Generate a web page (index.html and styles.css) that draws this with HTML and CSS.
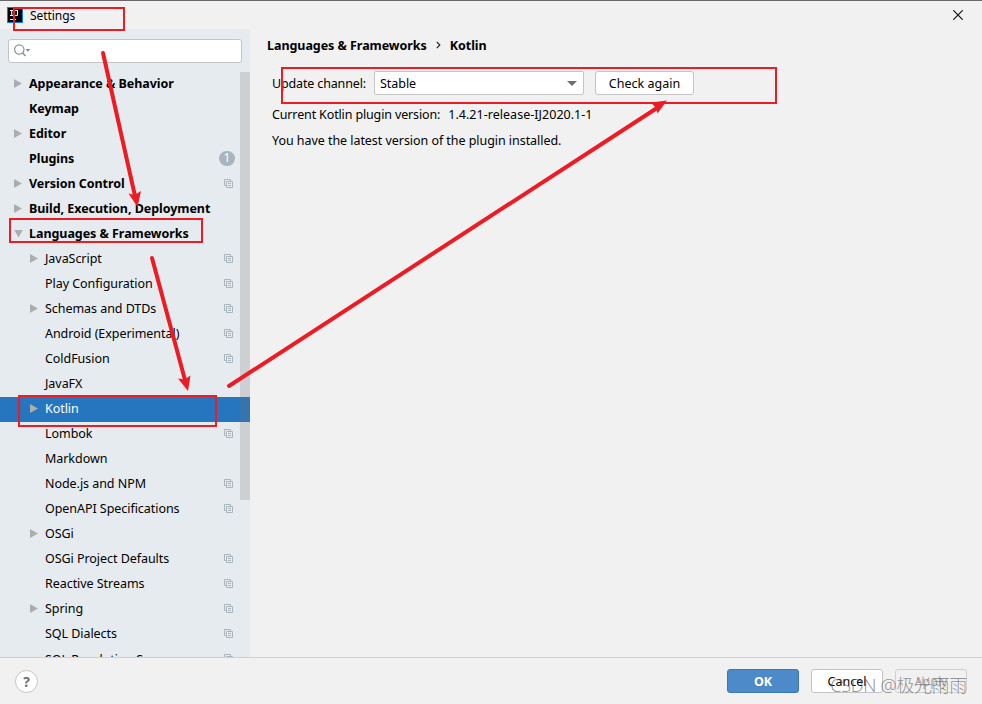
FILE: index.html
```html
<!DOCTYPE html>
<html lang="en">
<head>
  <meta charset="UTF-8" />
  <title>Settings</title>
  <link rel="stylesheet" href="styles.css">
</head>
<body>
  <svg class="defs" width="0" height="0">
    <symbol id="copy" viewBox="0 0 9 9">
      <path d="M2 6.5H.5V.5H6.5V2M2.5 2.5H8.5V8.5H2.5ZM4 4.5H7M4 6.5H7" fill="none" stroke="#a9b4bd" />
    </symbol>
  </svg>

  <div class="window">
    <header class="titlebar">
      <svg class="logo" width="16" height="16" viewBox="0 0 16 16">
        <rect width="16" height="16" fill="#087cfa" />
        <rect x="1" y="1" width="14" height="14" fill="#000" />
        <path d="M3 3.5H6.5M4.75 3.5V8.5M3 8.5H6.5M8 3.5H10.500V7.5Q10.500 8.5 9.5 8.5H8" fill="none" stroke="#fff" stroke-width="1.1" />
        <path d="M3 12.5H9" stroke="#fff" />
      </svg>
      <span class="title">Settings</span>
      <svg class="close" width="10" height="10" viewBox="0 0 10 10">
        <path d="M.3 .3L9.7 9.7M9.7 .3L.3 9.7" stroke="#111" stroke-width="1.2" />
      </svg>
    </header>

    <div class="main">
      <aside class="sidebar">
        <div class="search">
          <svg width="17" height="14" viewBox="0 0 17 14">
            <circle cx="5.3" cy="5.5" r="4.7" fill="none" stroke="#8b949b" stroke-width="1.2" />
            <path d="M8.7 9L11.5 12" stroke="#8b949b" stroke-width="1.6" />
            <path d="M11.5 5H16.3L13.9 7.8Z" fill="#7f8b93" />
          </svg>
        </div>
        <ul class="tree">
          <li class="row top"><i class="arrow"></i><span>Appearance &amp; Behavior</span></li>
          <li class="row top"><span>Keymap</span></li>
          <li class="row top"><i class="arrow"></i><span>Editor</span></li>
          <li class="row top"><span>Plugins</span><b class="badge">1</b></li>
          <li class="row top"><i class="arrow"></i><span>Version Control</span><svg class="copy"><use href="#copy" /></svg></li>
          <li class="row top"><i class="arrow"></i><span>Build, Execution, Deployment</span></li>
          <li class="row top"><i class="arrow open"></i><span>Languages &amp; Frameworks</span></li>
          <li class="row"><i class="arrow"></i><span>JavaScript</span><svg class="copy"><use href="#copy" /></svg></li>
          <li class="row"><span>Play Configuration</span><svg class="copy"><use href="#copy" /></svg></li>
          <li class="row"><i class="arrow"></i><span>Schemas and DTDs</span><svg class="copy"><use href="#copy" /></svg></li>
          <li class="row"><span>Android (Experimental)</span><svg class="copy"><use href="#copy" /></svg></li>
          <li class="row"><span>ColdFusion</span><svg class="copy"><use href="#copy" /></svg></li>
          <li class="row"><span>JavaFX</span></li>
          <li class="row selected"><i class="arrow"></i><span>Kotlin</span></li>
          <li class="row"><span>Lombok</span><svg class="copy"><use href="#copy" /></svg></li>
          <li class="row"><span>Markdown</span></li>
          <li class="row"><span>Node.js and NPM</span><svg class="copy"><use href="#copy" /></svg></li>
          <li class="row"><span>OpenAPI Specifications</span><svg class="copy"><use href="#copy" /></svg></li>
          <li class="row"><i class="arrow"></i><span>OSGi</span></li>
          <li class="row"><span>OSGi Project Defaults</span><svg class="copy"><use href="#copy" /></svg></li>
          <li class="row"><span>Reactive Streams</span><svg class="copy"><use href="#copy" /></svg></li>
          <li class="row"><i class="arrow"></i><span>Spring</span><svg class="copy"><use href="#copy" /></svg></li>
          <li class="row"><span>SQL Dialects</span><svg class="copy"><use href="#copy" /></svg></li>
          <li class="row last"><span>SQL Resolution Scopes</span><svg class="copy"><use href="#copy" /></svg></li>
        </ul>
        <div class="scrollbar"></div>
      </aside>

      <section class="content">
        <h1 class="breadcrumb">
          <span>Languages &amp; Frameworks</span>
          <svg width="5" height="8" viewBox="0 0 5 8"><path d="M.8 .8L3.8 4L.8 7.2" fill="none" stroke="#222" stroke-width="1.2" /></svg>
          <span>Kotlin</span>
        </h1>
        <div class="channel">
          <label>Update channel:</label>
          <div class="select">
            <span>Stable</span>
            <svg width="10" height="5" viewBox="0 0 10 5"><path d="M0 0H10L5 5Z" fill="#6e6e6e" /></svg>
          </div>
          <button class="btn check">Check again</button>
        </div>
        <p class="version"><span>Current Kotlin plugin version:</span><span>1.4.21-release-IJ2020.1-1</span></p>
        <p class="status">You have the latest version of the plugin installed.</p>
      </section>
    </div>

    <footer class="footer">
      <button class="help">?</button>
      <div class="actions">
        <button class="btn ok">OK</button>
        <button class="btn">Cancel</button>
        <button class="btn disabled">Apply</button>
      </div>
    </footer>
  </div>

  <div class="watermark">CSDN @极光雨雨</div>

  <!-- red boxes and arrows over the window -->
  <svg class="marks" width="982" height="704" viewBox="0 0 982 704">
    <g fill="none" stroke="#ed1c24" stroke-width="2">
      <rect x="14" y="8" width="110" height="22" />
      <rect x="10" y="219" width="192" height="23" />
      <rect x="19" y="396" width="197" height="30" />
      <rect x="282" y="68" width="494" height="35" />
    </g>
    <g stroke="#ed1c24" stroke-width="4" stroke-linecap="round">
      <path d="M103 53L135 196" />
      <path d="M152 258L185 380" />
      <path d="M229 386L657 108" />
    </g>
    <g fill="#ed1c24">
      <path d="M137.500 207L128.500 193.500L134.500 195L141 191Z" />
      <path d="M188 391L178 378.500L184.500 379.500L190.500 375.500Z" />
      <path d="M667 100.500L651 102.500L656 108L657.500 113.500Z" />
    </g>
  </svg>
</body>
</html>
```
FILE: styles.css
```css
:root {
  --bg: #f1f1f1;
  --side: #e6ebef;
  --blue: #2675bf;
  --border: #c4c4c4;
}

* {
  box-sizing: border-box;
}

body {
  margin: 0;
  overflow: hidden;
  font-family: "Noto Sans", "Noto Sans CJK SC", sans-serif;
  font-size: 12.5px;
  letter-spacing: -0.05px;
  color: #000;
}

.defs {
  position: absolute;
}

.window {
  display: flex;
  flex-direction: column;
  width: 982px;
  height: 704px;
  background: var(--bg);
  border-top: 1px solid #6b6869;
}

.titlebar {
  display: flex;
  align-items: center;
  height: 28px;
  padding: 0 19px 0 7px;
}

.title {
  margin: 1px auto 0 7px;
  font-size: 12px;
}

.main {
  display: flex;
  flex: 1;
  min-height: 0;
}

.sidebar {
  position: relative;
  width: 250px;
  overflow: hidden;
  background: var(--side);
}

.search {
  display: flex;
  align-items: center;
  width: 234px;
  height: 24px;
  margin: 10px 8px 9px;
  padding-left: 5px;
  background: #fff;
  border: 1px solid var(--border);
  border-radius: 3px;
}

.tree {
  margin: 0;
  padding: 0;
  list-style: none;
}

.row {
  display: grid;
  grid-template-columns: 15px 1fr auto;
  align-items: center;
  height: 25px;
  padding: 0 17px 0 30px;
  white-space: nowrap;
}

.row span {
  grid-column: 2;
  grid-row: 1;
  justify-self: start;
  margin-top: -2px;
}

.row.top {
  padding-left: 14px;
  font-weight: 700;
}

.row.selected {
  background: var(--blue);
  color: #fff;
}

.row.last span {
  margin-top: 0;
}

.arrow {
  grid-column: 1;
  grid-row: 1;
  width: 8px;
  height: 9px;
  margin-top: -2px;
  background: #adadad;
  clip-path: polygon(0 0, 100% 50%, 0 100%);
}

.arrow.open {
  width: 9px;
  height: 8px;
  clip-path: polygon(0 0, 100% 0, 50% 100%);
}

.copy {
  grid-column: 3;
  width: 9px;
  height: 9px;
  margin-top: -2px;
}

.badge {
  grid-column: 3;
  width: 16px;
  height: 15px;
  margin: -2px -2px 0 0;
  border-radius: 8px;
  background: #a9b5be;
  color: #fff;
  font-size: 12px;
  font-weight: 400;
  line-height: 14px;
  text-align: center;
}

/* floats over the rows, like the selection under it */
.scrollbar {
  position: absolute;
  top: 43px;
  right: 0;
  width: 10px;
  height: 428px;
  background: rgba(115, 115, 115, 0.22);
}

.content {
  flex: 1;
  padding: 7px 17px;
}

.breadcrumb {
  display: flex;
  align-items: center;
  gap: 9px;
  height: 18px;
  margin: 0;
  font-size: 12.5px;
}

.channel {
  display: flex;
  align-items: center;
  height: 24px;
  margin: 17px 0 0 5px;
}

.channel label {
  width: 102px;
  letter-spacing: -0.15px;
}

.select {
  display: flex;
  align-items: center;
  justify-content: space-between;
  width: 210px;
  height: 24px;
  margin-right: 11px;
  padding: 0 6px 0 5px;
  background: #fff;
  border: 1px solid var(--border);
  border-radius: 2px;
}

.btn {
  width: 72px;
  height: 24px;
  padding: 0;
  background: #fff;
  border: 1px solid var(--border);
  border-radius: 3px;
  font: inherit;
  color: #000;
}

.btn.check {
  width: 99px;
}

.btn.ok {
  background: #4c8aca;
  border-color: #3b78b6;
  color: #fff;
  font-weight: 700;
}

.btn.disabled {
  background: transparent;
  border-color: #cfcfcf;
  color: #a5a5a5;
}

.version,
.status {
  display: flex;
  gap: 8px;
  height: 18px;
  margin: 11px 0 0 5px;
  line-height: 18px;
}

.version span:first-child {
  letter-spacing: -0.14px;
}

.version span:last-child {
  letter-spacing: 0.03px;
}

.status {
  margin-top: 8px;
}

.footer {
  display: flex;
  align-items: center;
  justify-content: space-between;
  height: 47px;
  padding: 0 15px 0;
  border-top: 1px solid #d0d0d0;
}

.help {
  width: 23px;
  height: 23px;
  margin-top: 1px;
  padding: 0;
  background: #fff;
  border: 1px solid var(--border);
  border-radius: 50%;
  font: 700 14px/20px "Noto Sans", sans-serif;
  color: #6e6e6e;
}

.actions {
  display: flex;
  gap: 12px;
}

.watermark {
  position: absolute;
  right: 15px;
  bottom: 7px;
  font: 300 18px/24px "Noto Sans", "Noto Sans CJK SC", sans-serif;
  letter-spacing: -0.3px;
  color: rgba(90, 90, 90, 0.65);
  white-space: nowrap;
}

.marks {
  position: absolute;
  top: 0;
  left: 0;
}
```
